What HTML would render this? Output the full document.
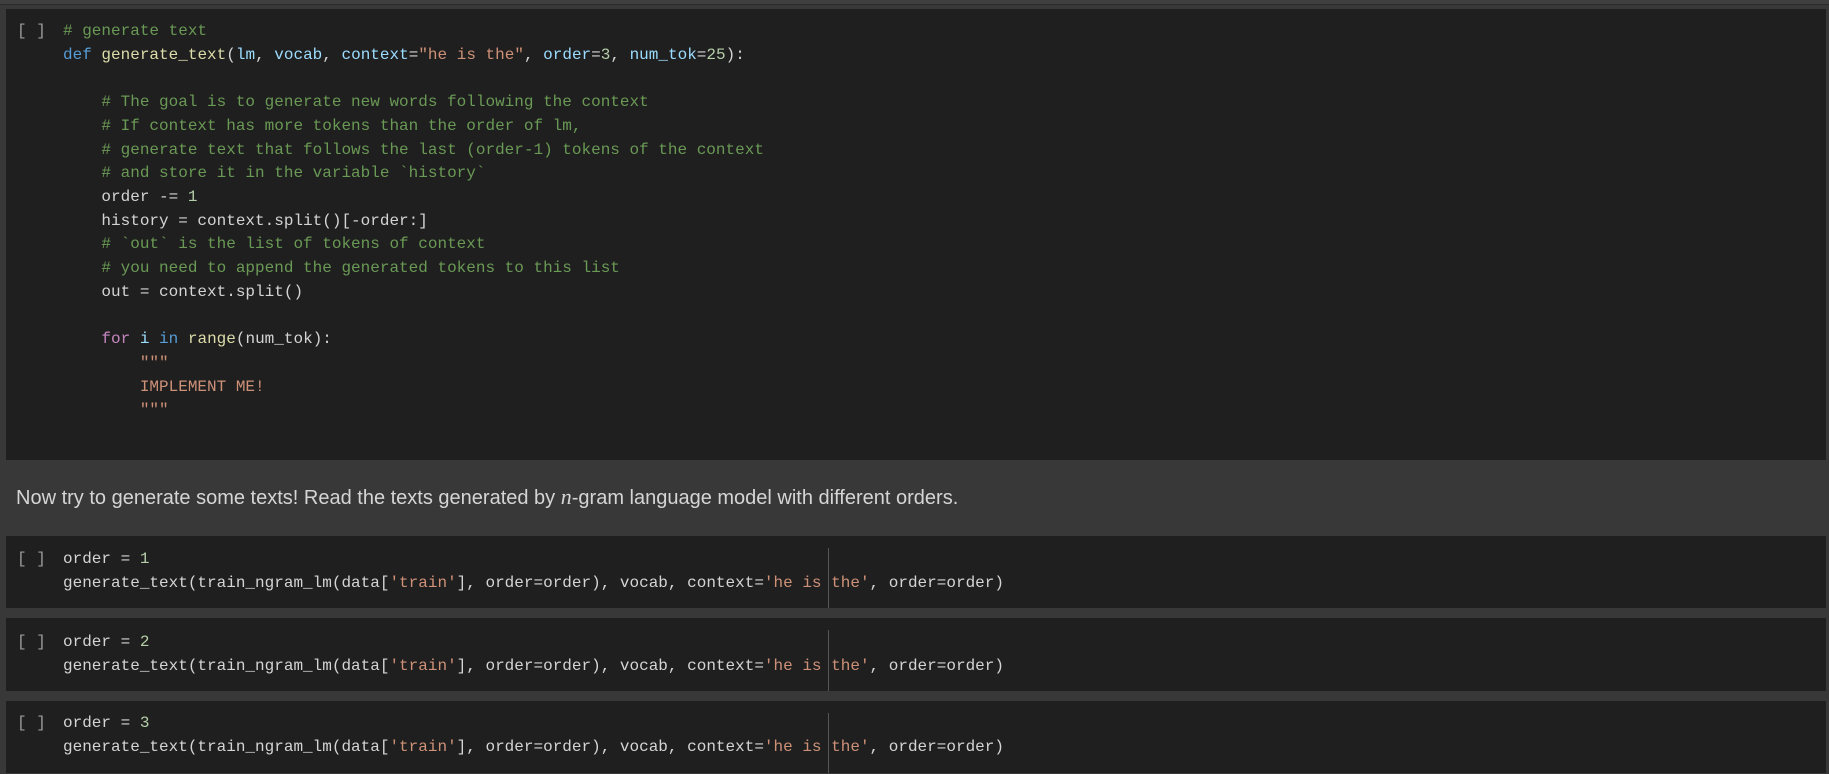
<!DOCTYPE html>
<html><head><meta charset="utf-8"><style>
html,body{margin:0;padding:0;}
body{width:1829px;height:774px;background:#383838;position:relative;overflow:hidden;font-family:"Liberation Mono",monospace;}
.top{position:absolute;left:0;top:0;width:1829px;height:4px;background:#3f3f3f;border-bottom:1px solid #2c2c2c;}
.cell{position:absolute;left:6px;right:3px;background:#1f1f1f;}
.br{position:absolute;left:17px;color:#9a9a9a;font-size:16px;line-height:23.7px;white-space:pre;}
.code{position:absolute;left:63px;font-size:16px;line-height:23.7px;white-space:pre;color:#d4d4d4;}
.c{color:#6a9955}.k{color:#569cd6}.f{color:#dcdcaa}.p{color:#9cdcfe}.s{color:#ce9178}.n{color:#b5cea8}.m{color:#c586c0}
.md{position:absolute;left:16px;top:484px;font-family:"Liberation Sans",sans-serif;font-size:20px;color:#d5d5d5;}
.vl{position:absolute;left:828px;width:1px;background:#555;}
</style></head><body>
<div class="top"></div>
<div class="cell" style="top:9px;height:451px;"></div>
<div class="br" style="top:20px">[ ]</div>
<div class="code" style="top:20px"><span class="c"># generate text</span>
<span class="k">def</span> <span class="f">generate_text</span>(<span class="p">lm</span>, <span class="p">vocab</span>, <span class="p">context</span>=<span class="s">"he is the"</span>, <span class="p">order</span>=<span class="n">3</span>, <span class="p">num_tok</span>=<span class="n">25</span>):

    <span class="c"># The goal is to generate new words following the context</span>
    <span class="c"># If context has more tokens than the order of lm,</span>
    <span class="c"># generate text that follows the last (order-1) tokens of the context</span>
    <span class="c"># and store it in the variable `history`</span>
    order -= <span class="n">1</span>
    history = context.split()[-order:]
    <span class="c"># `out` is the list of tokens of context</span>
    <span class="c"># you need to append the generated tokens to this list</span>
    out = context.split()

    <span class="m">for</span> <span class="p">i</span> <span class="k">in</span> <span class="f">range</span>(num_tok):
        <span class="s">"""</span>
        <span class="s">IMPLEMENT ME!</span>
        <span class="s">"""</span></div>

<div class="md">Now try to generate some texts! Read the texts generated by <i style="font-family:'Liberation Serif',serif;font-size:22px">n</i>-gram language model with different orders.</div>

<div class="cell" style="top:536px;height:72px;"></div>
<div class="vl" style="top:548px;height:60px;"></div>
<div class="br" style="top:548px">[ ]</div>
<div class="code" style="top:548px">order = <span class="n">1</span>
generate_text(train_ngram_lm(data[<span class="s">'train'</span>], order=order), vocab, context=<span class="s">'he is the'</span>, order=order)</div>

<div class="cell" style="top:618px;height:73px;"></div>
<div class="vl" style="top:630px;height:61px;"></div>
<div class="br" style="top:631px">[ ]</div>
<div class="code" style="top:631px">order = <span class="n">2</span>
generate_text(train_ngram_lm(data[<span class="s">'train'</span>], order=order), vocab, context=<span class="s">'he is the'</span>, order=order)</div>

<div class="cell" style="top:701px;height:72px;"></div>
<div class="vl" style="top:713px;height:60px;"></div>
<div class="br" style="top:712px">[ ]</div>
<div class="code" style="top:712px">order = <span class="n">3</span>
generate_text(train_ngram_lm(data[<span class="s">'train'</span>], order=order), vocab, context=<span class="s">'he is the'</span>, order=order)</div>
</body></html>
